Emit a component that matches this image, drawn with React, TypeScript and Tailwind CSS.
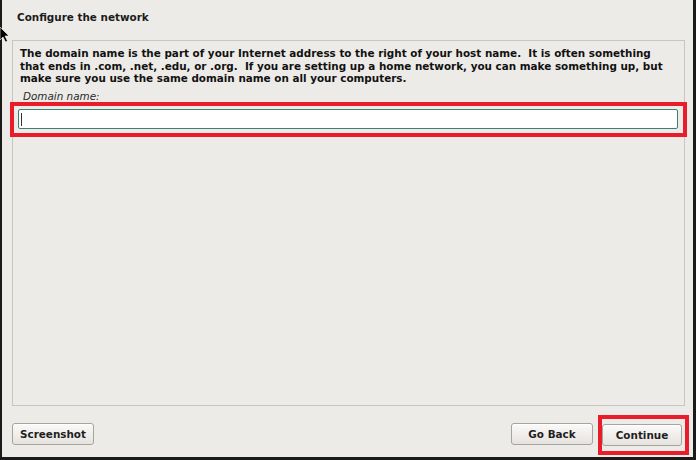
import React from "react";

const font = { fontFamily: '"DejaVu Sans", "Liberation Sans", sans-serif' };

function Btn({ children, className = "" }: { children: React.ReactNode; className?: string }) {
  return (
    <button
      className={
        "h-[22px] rounded-[3px] border border-[#a7a4a0] bg-gradient-to-b from-[#fbfaf9] to-[#e6e3df] text-[10.4px] font-bold text-[#1e1e1e] leading-none shadow-[inset_0_1px_0_#ffffff] " +
        className
      }
    >
      {children}
    </button>
  );
}

export default function App() {
  return (
    <div className="w-[696px] h-[460px] bg-[#1a1a1a] pl-[2px] pr-[3px] pb-[3px] overflow-hidden" style={font}>
      <div className="relative h-full bg-[#edebe7] flex flex-col">
        <svg className="absolute left-[-2px] top-[27px]" width="10" height="16" viewBox="0 0 10 16">
          <path d="M0 0 L0 13 L3 10 L5.5 15 L7.5 14 L5 9 L9 9 Z" fill="#000" stroke="#fff" strokeWidth="0.6" />
        </svg>
        <div className="h-[40px] pl-[15px] pt-[11px] text-[10.4px] font-bold leading-[13px] text-[#1b1b1b]">
          Configure the network
        </div>
        <div className="ml-[10px] mr-[8px] h-[366px] border border-[#c9c5c0] px-[7px] pt-[6px]">
          <p className="text-[10.4px] font-bold leading-[12.7px] text-[#111] whitespace-pre">
            {"The domain name is the part of your Internet address to the right of your host name.  It is often something\nthat ends in .com, .net, .edu, or .org.  If you are setting up a home network, you can make something up, but\nmake sure you use the same domain name on all your computers."}
          </p>
          <div className="mt-[4px] pl-[3px] text-[10.4px] italic leading-[14px] text-[#2a2a2a]">Domain name:</div>
          <div className="relative mt-[6px] ml-[-2px] mr-[-1px]">
            <div className="h-[20px] rounded-[2px] border border-[#3d7f78] bg-white flex items-center pl-[2px]">
              <div className="w-px h-[13px] bg-[#333]" />
            </div>
            <div className="absolute left-[-8px] right-[-9px] top-[-7px] bottom-[-8px] border-[4px] border-[#ea1c2a]" />
          </div>
        </div>
        <div className="mt-[16px] flex items-center pl-[10px] pr-[11px]">
          <Btn className="w-[82px]">Screenshot</Btn>
          <div className="flex-1" />
          <Btn className="w-[82px]">Go Back</Btn>
          <div className="relative ml-[9px]">
            <Btn className="w-[80px] h-[22px]">Continue</Btn>
            <div className="absolute left-[-4px] right-[-7px] top-[-7px] bottom-[-9px] border-[4px] border-[#ea1c2a]" />
          </div>
        </div>
      </div>
    </div>
  );
}
